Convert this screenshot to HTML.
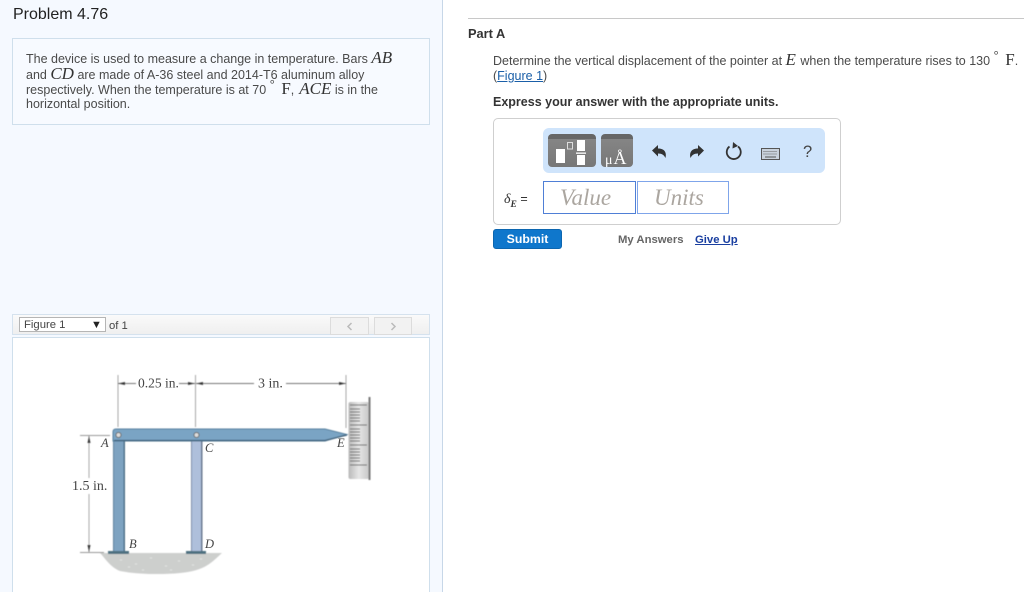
<!DOCTYPE html>
<html><head><meta charset="utf-8"><style>
html,body{margin:0;padding:0;width:1024px;height:592px;overflow:hidden;background:#fff}
body{position:relative;font-family:"Liberation Sans",sans-serif;font-size:12.5px;color:#4a4a4a}
.a{position:absolute;white-space:nowrap}
i.m,.m{font-family:"Liberation Serif",serif;font-size:17px;color:#333}
i.m{font-style:italic}
.b{position:absolute;box-sizing:border-box}
.s{font-family:"Liberation Serif",serif}
</style></head><body>
<div class="b" style="left:0;top:0;width:443px;height:592px;background:#f5f9ff;border-right:1px solid #c7d7e8"></div>
<div class="a" style="left:13px;top:6px;font-size:16px;color:#222;line-height:18px">Problem 4.76</div>
<div class="b" style="left:12px;top:38px;width:418px;height:87px;background:#f7faff;border:1px solid #cfdfec"></div>
<div class="a" style="left:26px;top:50px;line-height:16px">The device is used to measure a change in temperature. Bars <i class="m">AB</i></div>
<div class="a" style="left:26px;top:66px;line-height:16px">and <i class="m">CD</i> are made of A-36 steel and 2014-T6 aluminum alloy</div>
<div class="a" style="left:26px;top:81px;line-height:16px">respectively. When the temperature is at 70 <sup style="font-size:13px;line-height:0">°</sup> <span class="m" style="margin-left:3px">F</span>,<i class="m" style="margin-left:5px">ACE</i> is in the</div>
<div class="a" style="left:26px;top:96px;line-height:16px">horizontal position.</div>

<div class="b" style="left:12px;top:314px;width:418px;height:21px;background:linear-gradient(#fafafa,#efefef);border:1px solid #d5e2ee"></div>
<div class="b" style="left:19px;top:317px;width:87px;height:15px;background:#fff;border:1px solid #b5b5b5"></div>
<div class="a" style="left:24px;top:318px;line-height:15px;font-size:11.300px;color:#444">Figure 1</div>
<div class="a" style="left:91px;top:318px;line-height:15px;font-size:11px;color:#222">▼</div>
<div class="a" style="left:109px;top:318px;line-height:16px;font-size:11.300px;color:#444">of 1</div>
<div class="b" style="left:330px;top:317px;width:39px;height:18px;background:#f2f2f2;border:1px solid #dcdcdc"></div>
<div class="b" style="left:374px;top:317px;width:38px;height:18px;background:#f2f2f2;border:1px solid #dcdcdc"></div>
<svg class="b" style="left:330px;top:317px" width="82" height="18"><path d="M21.500 6l-3.500 3.500 3.500 3.500M61.500 6l3.500 3.500-3.500 3.500" fill="none" stroke="#bbb" stroke-width="1.500"/></svg>
<div class="b" style="left:12px;top:337px;width:418px;height:256px;background:#fff;border:1px solid #cfdfec;border-bottom:0"></div>

<svg class="b" style="left:0;top:0" width="443" height="592" font-family="Liberation Serif" font-size="14" fill="#444">
<defs><filter id="f" x="-5%" y="-5%" width="110%" height="110%"><feGaussianBlur stdDeviation="0.5"/></filter>
<filter id="t" x="-5%" y="-5%" width="110%" height="110%"><feGaussianBlur stdDeviation="0.3"/></filter>
<linearGradient id="sc" x1="0" x2="1" y1="0" y2="0"><stop offset="0" stop-color="#b9b9b9"/><stop offset=".5" stop-color="#e6e6e6"/><stop offset="1" stop-color="#c8c8c8"/></linearGradient></defs>
<g filter="url(#f)">
<path d="M118 375V427M195.500 375V427M346 375V428" stroke="#a8a8a8" stroke-width="1" fill="none"/>
<path d="M118 383.500H136M179 383.500H195M196 383.500H254M286 383.500H346" stroke="#777" stroke-width="1" fill="none"/>
<path d="M118 383.500l7-1.500v3zM195 383.500l-7-1.500v3zM196 383.500l7-1.500v3zM346 383.500l-7-1.500v3z" fill="#333"/>
<path d="M80 435.500H110M80 552.500H104" stroke="#999" fill="none"/>
<path d="M89 436V478M89 494V552" stroke="#aaa" fill="none"/>
<path d="M89 436l-1.500 7h3zM89 552l-1.500-7h3z" fill="#333"/>
<path d="M100 553H222C212 562 205 571 180 573C160 575 135 574 120 571C110 567 105 558 100 553Z" fill="#cdcfcd"/>
<path d="M120 560h2M135 564h2M150 558h2M165 566h2M178 561h2M192 565h2M142 570h2M170 570h2M128 567h2M200 559h2" stroke="#e6e6e6" fill="none"/>
<rect x="113" y="440" width="12" height="112" fill="#7ea3c1"/><rect x="123.500" y="440" width="1.500" height="112" fill="#4d6f88"/><rect x="113" y="440" width="1" height="112" fill="#5e829e"/>
<rect x="191" y="440" width="11" height="112" fill="#aebfdb"/><rect x="201" y="440" width="1.500" height="112" fill="#66778f"/><rect x="191" y="440" width="1" height="112" fill="#7c8da8"/>
<rect x="108" y="551" width="21" height="3" fill="#4e6f80"/><rect x="186" y="551" width="20" height="3" fill="#4e6f80"/>
<path d="M116 429H325L347 434.500L325 441H113V432Q113 429 116 429Z" fill="#7aa4c4" stroke="#557f9d" stroke-width="1"/>
<path d="M114 440.500H325L347 435" stroke="#3f6079" stroke-width="1.300" fill="none"/>
<circle cx="118.500" cy="435" r="2.500" fill="#ddd" stroke="#666"/><circle cx="196.500" cy="435" r="2.500" fill="#ddd" stroke="#666"/>
<rect x="348.500" y="402" width="20.500" height="77" rx="2" fill="url(#sc)"/>
<rect x="368.500" y="397" width="2" height="83" fill="#777"/>
<path d="M350 405H367M350 409H360M350 412H360M350 415H360M350 418H360M350 421H360M350 425H367M350 429H360M350 432H360M350 435H360M350 438H360M350 441H360M350 445H367M350 449H360M350 452H360M350 455H360M350 458H360M350 461H360M350 465H367" stroke="#666" stroke-width="1" fill="none"/>
</g>
<g filter="url(#t)">
<text x="138" y="387.500" font-size="13.500">0.25 in.</text>
<text x="258" y="387.500">3 in.</text>
<text x="72" y="490">1.5 in.</text>
<g font-style="italic" font-size="12.500"><text x="101" y="447">A</text><text x="205" y="452">C</text><text x="337" y="447">E</text><text x="129" y="548">B</text><text x="205" y="548">D</text></g>
</g>
</svg>

<div class="b" style="left:468px;top:18px;width:556px;height:1px;background:#c8c8c8"></div>
<div class="a" style="left:468px;top:26px;font-weight:bold;font-size:12.800px;color:#333;line-height:16px">Part A</div>
<div class="a" style="left:493px;top:52px;line-height:16px">Determine the vertical displacement of the pointer at <i class="m" style="margin-right:1px">E</i> when the temperature rises to 130 <sup style="font-size:13px;line-height:0">°</sup> <span class="m" style="margin-left:3px">F</span>.</div>
<div class="a" style="left:493px;top:68px;line-height:16px">(<span style="color:#1a5fa8;text-decoration:underline">Figure 1</span>)</div>
<div class="a" style="left:493px;top:94px;line-height:16px;font-weight:bold;color:#333">Express your answer with the appropriate units.</div>

<div class="b" style="left:493px;top:118px;width:348px;height:107px;border:1px solid #cfcfcf;border-radius:5px;background:#fff"></div>
<div class="b" style="left:543px;top:128px;width:282px;height:45px;border-radius:6px;background:#cfe4fb"></div>
<div class="b" style="left:548px;top:134px;width:48px;height:33px;border-radius:4px;background:linear-gradient(#666 0,#666 5px,#858585 5px,#777)"></div>
<div class="b" style="left:601px;top:134px;width:32px;height:33px;border-radius:4px;background:linear-gradient(#666 0,#666 5px,#858585 5px,#777)"></div>
<svg class="b" style="left:548px;top:134px" width="48" height="33"><rect x="8" y="15" width="9" height="14" fill="#fff"/><rect x="19.500" y="8.500" width="5" height="6.500" fill="none" stroke="#ddd"/><rect x="29" y="6" width="8" height="11" fill="#fff"/><rect x="28" y="18.500" width="10" height="1.300" fill="#fff"/><rect x="29" y="21" width="8" height="10" fill="#fff"/></svg>
<div class="a s" style="left:605px;top:149px;font-size:14px;line-height:18px;color:#fff">μ<span style="font-size:18px;margin-left:1px">Å</span></div>

<svg class="b" style="left:640px;top:130px" width="190" height="45" fill="#333">
<path d="M12 20.500L18 15V18.500C24 18.500 27 22 25.500 28C24 25 22 23.500 18 23.500V26.500Z"/>
<path d="M64 20.500L58 15V18.500C52 18.500 49 22 50.500 28C52 25 54 23.500 58 23.500V26.500Z"/>
<path d="M89.500 16.500A7 7 0 1 0 98 16.500" fill="none" stroke="#333" stroke-width="1.800"/>
<path d="M93 12L98 16L92.500 18.500Z"/>
<rect x="121.500" y="18.500" width="18" height="11" fill="#c9d2dc" stroke="#555"/>
<path d="M123.500 21.500H137.500M123.500 24H137.500" stroke="#666" stroke-dasharray="1 1" fill="none"/><path d="M125 27H136" stroke="#555" fill="none"/>
</svg>
<div class="a" style="left:803px;top:143px;font-size:16.500px;line-height:18px;color:#444">?</div>

<div class="a" style="left:504px;top:191px;line-height:16px;color:#333"><i class="m" style="font-size:14px">δ<sub style="font-size:9.500px;font-weight:bold;line-height:0">E</sub></i> =</div>
<div class="b s" style="left:543px;top:181px;width:93px;height:33px;border:1px solid #4f7fd6;background:#fff;color:#aba6a0;font-style:italic;font-size:23px;line-height:31px;padding-left:16px">Value</div>
<div class="b s" style="left:637px;top:181px;width:92px;height:33px;border:1px solid #7fa5ea;background:#fff;color:#aba6a0;font-style:italic;font-size:23px;line-height:31px;padding-left:16px">Units</div>

<div class="b" style="left:493px;top:229px;width:69px;height:20px;border-radius:3px;background:#0f77cc;border:1px solid #0c66b0;color:#fff;font-weight:bold;font-size:12.300px;text-align:center;line-height:18px">Submit</div>
<div class="a" style="left:618px;top:232px;font-weight:bold;font-size:11.300px;line-height:16px;color:#666">My Answers</div>
<div class="a" style="left:695px;top:232px;font-weight:bold;font-size:11.300px;line-height:16px;color:#1a3fa0;text-decoration:underline">Give Up</div>
</body></html>
